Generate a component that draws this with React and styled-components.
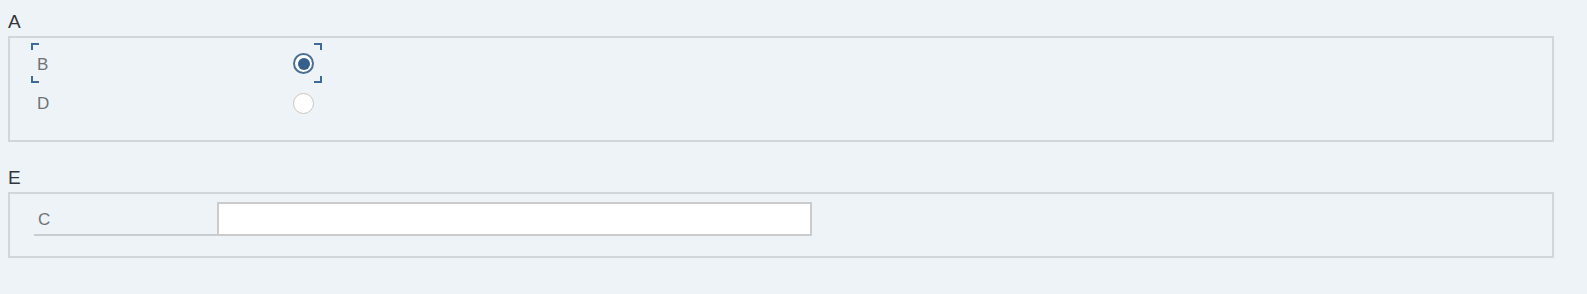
import React from 'react';
import styled, { createGlobalStyle } from 'styled-components';

const GlobalStyle = createGlobalStyle`
  html, body {
    margin: 0;
    padding: 0;
    background: #eef3f8;
  }
  body {
    font-family: "Liberation Sans", Arial, sans-serif;
  }
`;

const Page = styled.div`
  padding: 8px 33px 8px 8px;
  display: flex;
  flex-direction: column;
  gap: 22px;
`;

const Section = styled.section`
  display: flex;
  flex-direction: column;
`;

const Title = styled.div`
  height: 28px;
  padding-top: 2px;
  box-sizing: border-box;
  font-size: 19px;
  line-height: 24px;
  color: #32363a;
`;

const Box = styled.div`
  border: 2px solid #d2d5d9;
  padding: ${p => p.$pad};
  display: flex;
  flex-direction: column;
`;

const RadioRow = styled.div`
  width: 291px;
  height: 40px;
  display: flex;
  align-items: center;
  justify-content: space-between;
  padding: 1px 8px 0 6px;
  box-sizing: border-box;
  ${p => p.$focused && `
    background:
      linear-gradient(#3f6a96, #3f6a96) top left / 8px 2px no-repeat,
      linear-gradient(#3f6a96, #3f6a96) top left / 2px 7px no-repeat,
      linear-gradient(#3f6a96, #3f6a96) top right / 8px 2px no-repeat,
      linear-gradient(#3f6a96, #3f6a96) top right / 2px 7px no-repeat,
      linear-gradient(#3f6a96, #3f6a96) bottom left / 8px 2px no-repeat,
      linear-gradient(#3f6a96, #3f6a96) bottom left / 2px 7px no-repeat,
      linear-gradient(#3f6a96, #3f6a96) bottom right / 8px 2px no-repeat,
      linear-gradient(#3f6a96, #3f6a96) bottom right / 2px 7px no-repeat;
  `}
`;

const Label = styled.span`
  font-size: 17px;
  color: #6f7275;
  padding-top: ${p => p.$shift || 0}px;
`;

const Radio = styled.span`
  width: 21px;
  height: 21px;
  box-sizing: border-box;
  border-radius: 50%;
  background: #fff;
  border: ${p => (p.$checked ? '2px solid #4a6f93' : '1.5px solid #cbc6c0')};
  display: flex;
  align-items: center;
  justify-content: center;
  &::after {
    content: '';
    display: ${p => (p.$checked ? 'block' : 'none')};
    width: 12px;
    height: 12px;
    border-radius: 50%;
    background: #35608b;
  }
`;

const FieldRow = styled.div`
  display: flex;
  align-items: stretch;
  height: 34px;
`;

const FieldLabel = styled.div`
  width: 183px;
  border-bottom: 2px solid #c9cdd1;
  display: flex;
  align-items: center;
  padding-left: 4px;
  padding-top: 4px;
  box-sizing: border-box;
`;

const Input = styled.input`
  width: 595px;
  height: 34px;
  box-sizing: border-box;
  border: 2px solid #cbcbcb;
  background: #fff;
  margin: 0;
  outline: none;
`;

export default function App() {
  return (
    <>
      <GlobalStyle />
      <Page>
        <Section>
          <Title>A</Title>
          <Box $pad="5px 0 17px 21px">
            <RadioRow $focused>
              <Label $shift={3}>B</Label>
              <Radio $checked />
            </RadioRow>
            <RadioRow>
              <Label $shift={1}>D</Label>
              <Radio />
            </RadioRow>
          </Box>
        </Section>
        <Section>
          <Title>E</Title>
          <Box $pad="8px 0 20px 24px">
            <FieldRow>
              <FieldLabel>
                <Label>C</Label>
              </FieldLabel>
              <Input type="text" />
            </FieldRow>
          </Box>
        </Section>
      </Page>
    </>
  );
}
